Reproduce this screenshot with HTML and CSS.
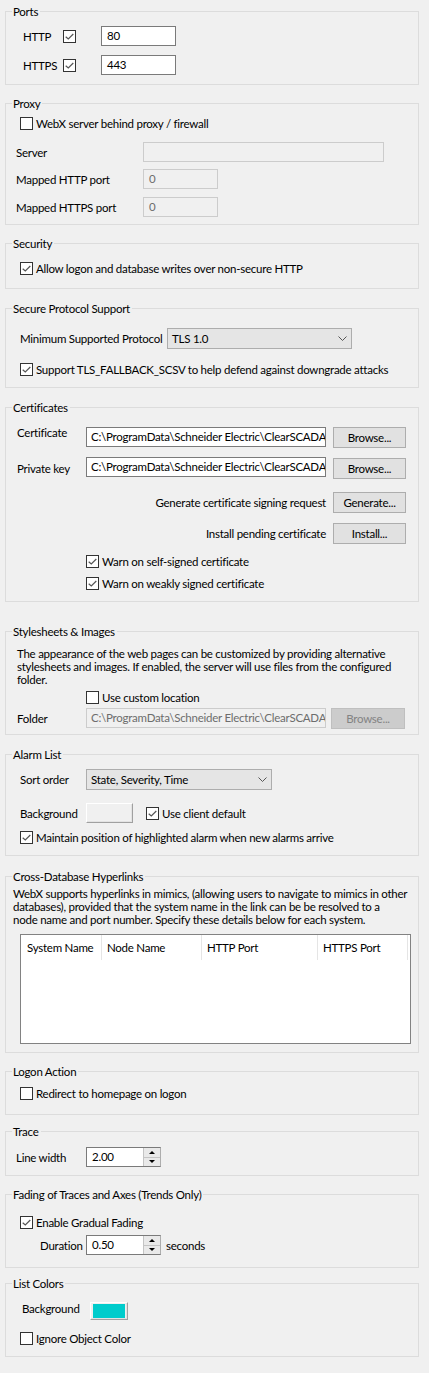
FILE: index.html
```html
<!DOCTYPE html>
<html>
<head>
<meta charset="utf-8">
<title>WebX Settings</title>
<link rel="stylesheet" href="styles.css">
</head>
<body>
<div class="page">

  <fieldset class="group g-ports">
    <legend>Ports</legend>
    <div class="port-row mt7">
      <span class="port-lbl">HTTP</span>
      <span class="cb"><svg viewBox="0 0 11 11" width="11" height="11"><path d="M1.7 5.7 L4.3 8 L9.3 3" /></svg></span>
      <span class="field port-field">80</span>
    </div>
    <div class="port-row mt9">
      <span class="port-lbl">HTTPS</span>
      <span class="cb"><svg viewBox="0 0 11 11" width="11" height="11"><path d="M1.7 5.7 L4.3 8 L9.3 3" /></svg></span>
      <span class="field port-field">443</span>
    </div>
  </fieldset>

  <fieldset class="group g-proxy">
    <legend>Proxy</legend>
    <div class="chk mt5"><span class="cb"></span><span>WebX server behind proxy / firewall</span></div>
    <div class="proxy-row mt11">
      <span class="proxy-lbl">Server</span>
      <span class="field off w241"></span>
    </div>
    <div class="proxy-row mt7">
      <span class="proxy-lbl">Mapped HTTP port</span>
      <span class="field off w75 pad5">0</span>
    </div>
    <div class="proxy-row mt8">
      <span class="proxy-lbl">Mapped HTTPS port</span>
      <span class="field off w75 pad5">0</span>
    </div>
  </fieldset>

  <fieldset class="group g-security">
    <legend>Security</legend>
    <div class="chk mt10"><span class="cb"><svg viewBox="0 0 11 11" width="11" height="11"><path d="M1.7 5.7 L4.3 8 L9.3 3" /></svg></span><span>Allow logon and database writes over non-secure HTTP</span></div>
  </fieldset>

  <fieldset class="group g-proto">
    <legend>Secure Protocol Support</legend>
    <div class="proto-row mt12">
      <span class="proto-lbl">Minimum Supported Protocol</span>
      <span class="select w185"><span>TLS 1.0</span><svg class="chev" viewBox="0 0 9 5" width="9" height="5"><path d="M0.5 0.5 L4.5 4.5 L8.5 0.5" /></svg></span>
    </div>
    <div class="chk mt13"><span class="cb"><svg viewBox="0 0 11 11" width="11" height="11"><path d="M1.7 5.7 L4.3 8 L9.3 3" /></svg></span><span>Support TLS_FALLBACK_SCSV to help defend against downgrade attacks</span></div>
  </fieldset>

  <fieldset class="group g-certs">
    <legend>Certificates</legend>
    <div class="cert-row mt12">
      <span class="cert-lbl up1">Certificate</span>
      <span class="field">C:\ProgramData\Schneider Electric\ClearSCADA\</span>
      <span class="btn">Browse...</span>
    </div>
    <div class="cert-row mt9">
      <span class="cert-lbl dn5">Private key</span>
      <span class="field">C:\ProgramData\Schneider Electric\ClearSCADA\</span>
      <span class="btn dn1">Browse...</span>
    </div>
    <div class="cert-row mt14">
      <span class="cert-action">Generate certificate signing request</span>
      <span class="btn">Generate...</span>
    </div>
    <div class="cert-row mt10">
      <span class="cert-action">Install pending certificate</span>
      <span class="btn">Install...</span>
    </div>
    <div class="chk indent86 mt10"><span class="cb"><svg viewBox="0 0 11 11" width="11" height="11"><path d="M1.7 5.7 L4.3 8 L9.3 3" /></svg></span><span>Warn on self-signed certificate</span></div>
    <div class="chk indent86 mt7"><span class="cb"><svg viewBox="0 0 11 11" width="11" height="11"><path d="M1.7 5.7 L4.3 8 L9.3 3" /></svg></span><span>Warn on weakly signed certificate</span></div>
  </fieldset>

  <fieldset class="group g-styles">
    <legend>Stylesheets &amp; Images</legend>
    <p class="para para-styles">The appearance of the web pages can be customized by providing alternative<br>stylesheets and images. If enabled, the server will use files from the configured<br>folder.</p>
    <div class="chk indent86 mt4"><span class="cb"></span><span>Use custom location</span></div>
    <div class="folder-row mt3">
      <span class="cert-lbl">Folder</span>
      <span class="field off w240">C:\ProgramData\Schneider Electric\ClearSCADA\</span>
      <span class="btn off">Browse...</span>
    </div>
  </fieldset>

  <fieldset class="group g-alarm">
    <legend>Alarm List</legend>
    <div class="alarm-row mt7">
      <span class="alarm-lbl">Sort order</span>
      <span class="select w186"><span>State, Severity, Time</span><svg class="chev" viewBox="0 0 9 5" width="9" height="5"><path d="M0.5 0.5 L4.5 4.5 L8.5 0.5" /></svg></span>
    </div>
    <div class="alarm-row bg-row mt13">
      <span class="alarm-lbl">Background</span>
      <span class="color-btn wide"></span>
      <span class="chk inline"><span class="cb"><svg viewBox="0 0 11 11" width="11" height="11"><path d="M1.7 5.7 L4.3 8 L9.3 3" /></svg></span><span>Use client default</span></span>
    </div>
    <div class="chk mt7"><span class="cb"><svg viewBox="0 0 11 11" width="11" height="11"><path d="M1.7 5.7 L4.3 8 L9.3 3" /></svg></span><span>Maintain position of highlighted alarm when new alarms arrive</span></div>
  </fieldset>

  <fieldset class="group g-cross">
    <legend>Cross-Database Hyperlinks</legend>
    <p class="para para-cross">WebX supports hyperlinks in mimics, (allowing users to navigate to mimics in other<br>databases), provided that the system name in the link can be be resolved to a<br>node name and port number. Specify these details below for each system.</p>
    <div class="list-view">
      <div class="list-head">
        <span class="th c1">System Name</span>
        <span class="th c2">Node Name</span>
        <span class="th c3">HTTP Port</span>
        <span class="th c4">HTTPS Port</span>
      </div>
    </div>
  </fieldset>

  <fieldset class="group g-logon">
    <legend>Logon Action</legend>
    <div class="chk mt7"><span class="cb"></span><span>Redirect to homepage on logon</span></div>
  </fieldset>

  <fieldset class="group g-trace">
    <legend>Trace</legend>
    <div class="trace-row mt8">
      <span class="trace-lbl">Line width</span>
      <span class="spin"><span class="spin-val">2.00</span><span class="spin-btns"><span class="sb"><i class="tri-up"></i></span><span class="sb"><i class="tri-dn"></i></span></span></span>
    </div>
  </fieldset>

  <fieldset class="group g-fading">
    <legend>Fading of Traces and Axes (Trends Only)</legend>
    <div class="chk mt13"><span class="cb"><svg viewBox="0 0 11 11" width="11" height="11"><path d="M1.7 5.7 L4.3 8 L9.3 3" /></svg></span><span>Enable Gradual Fading</span></div>
    <div class="dur-row mt5">
      <span class="dur-lbl">Duration</span>
      <span class="spin"><span class="spin-val">0.50</span><span class="spin-btns"><span class="sb"><i class="tri-up"></i></span><span class="sb"><i class="tri-dn"></i></span></span></span>
      <span class="unit">seconds</span>
    </div>
  </fieldset>

  <fieldset class="group g-colors">
    <legend>List Colors</legend>
    <div class="colors-row mt11">
      <span class="colors-lbl">Background</span>
      <span class="color-btn small"><span class="swatch"></span></span>
    </div>
    <div class="chk mt11"><span class="cb"></span><span>Ignore Object Color</span></div>
  </fieldset>

</div>
</body>
</html>
```

FILE: styles.css
```css
* { box-sizing: border-box; }

body {
  margin: 0;
  background: #f0f0f0;
  font-family: Lato, "Liberation Sans", sans-serif;
  font-size: 11.5px;
  letter-spacing: -0.25px;
  color: #000;
}

.page {
  padding-top: 4px;
  padding-bottom: 16px;
}

/* group boxes */
.group {
  margin: 0 0 0 5px;
  width: 414px;
  min-width: 0;
  padding: 0;
  border: 1px solid #dcdcdc;
}
.group legend {
  margin-left: 6px;
  padding: 0 2px 0 1px;
  height: 15px;
  line-height: 15px;
  font-size: 11.5px;
  white-space: nowrap;
}

.g-ports    { padding-bottom: 9px; }
.g-proxy    { margin-top: 11px; padding-bottom: 7px; }
.g-security { margin-top: 11px; padding-bottom: 12px; }
.g-proto    { margin-top: 12px; padding-bottom: 10px; }
.g-certs    { margin-top: 12px; padding-bottom: 10px; }
.g-styles   { margin-top: 22px; padding-bottom: 5px; }
.g-alarm    { margin-top: 12px; padding-bottom: 10px; }
.g-cross    { margin-top: 13px; padding-bottom: 8px; }
.g-logon    { margin-top: 11px; padding-bottom: 13px; }
.g-trace    { margin-top: 9px;  padding-bottom: 8px; }
.g-fading   { margin-top: 11px; padding-bottom: 12px; }
.g-colors   { margin-top: 8px;  padding-bottom: 10px; }

/* spacing helpers */
.mt3 { margin-top: 3px; }
.mt4 { margin-top: 4px; }
.mt5 { margin-top: 5px; }
.mt7 { margin-top: 7px; }
.mt8 { margin-top: 8px; }
.mt9 { margin-top: 9px; }
.mt10 { margin-top: 10px; }
.mt11 { margin-top: 11px; }
.mt12 { margin-top: 12px; }
.mt13 { margin-top: 13px; }
.mt14 { margin-top: 14px; }

/* checkbox */
.cb {
  flex: none;
  display: inline-flex;
  width: 13px;
  height: 13px;
  border: 1px solid #333;
  background: #fff;
}
.cb svg { display: block; }
.cb path {
  fill: none;
  stroke: #555;
  stroke-width: 1.2;
}

.chk {
  display: flex;
  align-items: center;
  height: 15px;
  padding-left: 14px;
  white-space: nowrap;
}
.chk .cb + span { margin-left: 3px; }
.chk.indent86 { padding-left: 80px; }
.chk.inline { padding-left: 0; margin-left: 13px; }

/* text fields */
.field {
  flex: none;
  display: block;
  min-width: 0;
  height: 20px;
  border: 1px solid #7a7a7a;
  background: #fff;
  padding: 0 4px;
  line-height: 18px;
  white-space: nowrap;
  overflow: hidden;
}
.field.off {
  border-color: #cccccc;
  background: #f0f0f0;
  color: #6d6d6d;
}
.pad5 { padding-left: 5px; }
.w75 { width: 75px; }
.w240 { width: 240px; }
.w241 { width: 241px; }

/* buttons */
.btn {
  display: flex;
  align-items: center;
  justify-content: center;
  height: 21px;
  border: 1px solid #adadad;
  background: #e1e1e1;
  white-space: nowrap;
}
.btn.off {
  border-color: #bfbfbf;
  background: #cccccc;
  color: #838383;
}

/* combo boxes */
.select {
  flex: none;
  display: flex;
  align-items: center;
  justify-content: space-between;
  height: 21px;
  border: 1px solid #adadad;
  background: #e5e5e5;
  padding: 0 4px 0 4px;
  white-space: nowrap;
}
.w185 { width: 185px; }
.w186 { width: 186px; }
.chev path {
  fill: none;
  stroke: #555;
  stroke-width: 1;
}

/* ports */
.port-row {
  display: flex;
  align-items: center;
  height: 20px;
  padding-left: 17px;
}
.port-lbl { width: 40px; }
.port-field {
  width: 75px;
  margin-left: 25px;
  padding-left: 5px;
}

/* proxy */
.proxy-row {
  display: flex;
  align-items: center;
  height: 20px;
  padding-left: 10px;
  white-space: nowrap;
}
.proxy-lbl { width: 127px; }

/* protocol */
.proto-row {
  display: flex;
  align-items: center;
  height: 21px;
  padding-left: 14px;
  white-space: nowrap;
}
.proto-lbl { width: 147px; flex: none; }

/* certificates */
.cert-row {
  display: grid;
  grid-template-columns: 62px 240px 73px;
  column-gap: 7px;
  align-items: start;
  height: 21px;
  padding-left: 11px;
}
.cert-row > * { min-width: 0; }
.cert-row .field { width: 240px; }
.cert-lbl { line-height: 14px; white-space: nowrap; }
.up1 { margin-top: -1px; }
.dn5 { margin-top: 5px; }
.dn1 { margin-top: 1px; }
.cert-action {
  grid-column: 1 / 3;
  justify-self: end;
  align-self: center;
  white-space: nowrap;
}

/* paragraphs */
.para {
  margin: 0;
  line-height: 13px;
  white-space: nowrap;
}
.para-styles { margin-top: 8px; padding-left: 11px; }
.para-cross { margin-top: 3px; padding-left: 7px; }

.folder-row {
  display: flex;
  align-items: center;
  height: 21px;
  padding-left: 11px;
}
.folder-row .cert-lbl { width: 69px; flex: none; }
.folder-row .field { align-self: flex-start; }
.folder-row .btn { flex: none; width: 74px; margin-left: 5px; }

/* alarm list */
.alarm-row {
  display: flex;
  align-items: center;
  height: 21px;
  padding-left: 14px;
  white-space: nowrap;
}
.alarm-lbl { width: 66px; flex: none; }
.bg-row { height: 20px; }

.color-btn {
  flex: none;
  display: block;
  border: 1px solid;
  border-color: #ffffff #a0a0a0 #a0a0a0 #ffffff;
  background: #f0f0f0;
  box-shadow: inset -1px -1px 0 #e3e3e3;
}
.color-btn.wide { width: 47px; height: 20px; }
.color-btn.small {
  width: 38px;
  height: 18px;
  padding: 1px 2px 1px 2px;
}
.swatch {
  display: block;
  width: 100%;
  height: 100%;
  background: #00cccc;
}

/* cross database list */
.list-view {
  margin: 8px 0 0 14px;
  width: 391px;
  height: 110px;
  border: 1px solid #828282;
  background: #fff;
}
.list-head {
  display: flex;
  height: 25px;
}
.th {
  flex: none;
  line-height: 25px;
  padding-left: 5px;
  border-right: 1px solid #e5e5e5;
  white-space: nowrap;
  overflow: hidden;
}
.c1 { width: 81px; padding-left: 6px; }
.c2 { width: 100px; }
.c3 { width: 116px; }
.c4 { width: 90px; }

/* spin boxes */
.trace-row, .dur-row {
  display: flex;
  align-items: center;
  height: 20px;
  white-space: nowrap;
}
.trace-row { padding-left: 10px; }
.trace-lbl { width: 70px; flex: none; }
.dur-row { padding-left: 34px; }
.dur-lbl { width: 46px; flex: none; }
.unit { margin-left: 5px; }

.spin {
  flex: none;
  display: flex;
  width: 75px;
  height: 20px;
  border: 1px solid #7a7a7a;
  border-right-color: #adadad;
  background: #fff;
}
.spin-val {
  flex: 1;
  padding-left: 5px;
  line-height: 18px;
}
.spin-btns {
  width: 17px;
  display: flex;
  flex-direction: column;
  border-left: 1px solid #c4c4c4;
  background: #e9e9e9;
}
.sb {
  flex: 1;
  display: flex;
  align-items: center;
  justify-content: center;
}
.sb + .sb { border-top: 1px solid #c4c4c4; }
.tri-up, .tri-dn {
  display: block;
  width: 0;
  height: 0;
  border-left: 3px solid transparent;
  border-right: 3px solid transparent;
}
.tri-up { border-bottom: 3px solid #000; }
.tri-dn { border-top: 3px solid #000; }

/* list colors */
.colors-row {
  display: flex;
  align-items: flex-start;
  height: 18px;
  padding-left: 16px;
  white-space: nowrap;
}
.colors-lbl { width: 68px; flex: none; line-height: 14px; }
```
